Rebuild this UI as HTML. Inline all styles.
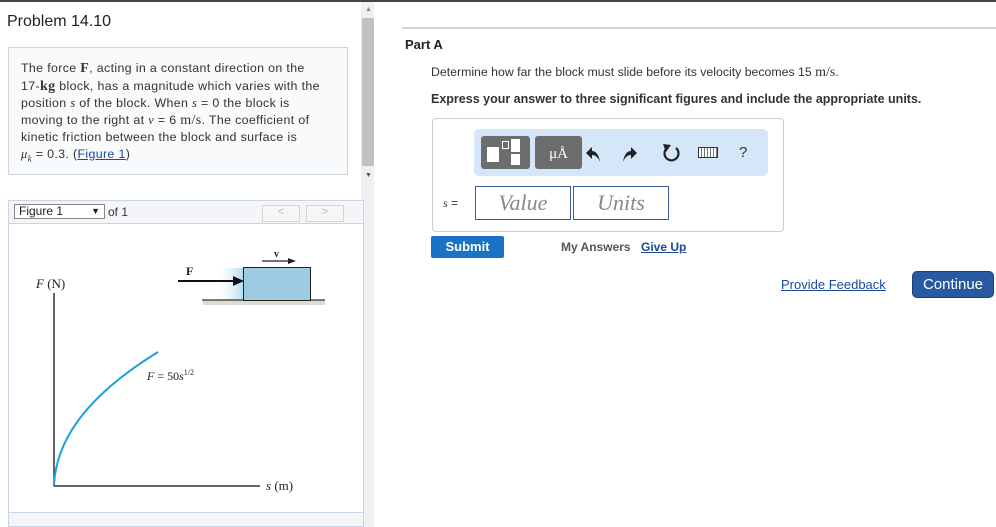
<!DOCTYPE html>
<html><head><style>
*{margin:0;padding:0;box-sizing:border-box}
body{width:996px;height:527px;background:#fff;font-family:"Liberation Sans",sans-serif;position:relative;overflow:hidden;color:#333}
.a{position:absolute}
.serif{font-family:"Liberation Serif",serif}
a{color:#1a4a9a}
</style></head><body>
<div class="a" style="left:0;top:0;width:996px;height:2px;background:#444"></div>
<div class="a" style="left:7px;top:13px;font-size:16px;color:#222">Problem 14.10</div>
<div class="a" style="left:8px;top:47px;width:340px;height:128px;border:1px solid #ccd3dc;background:#f8fafc"></div>
<div class="a" style="left:21px;top:60px;white-space:nowrap;font-size:12.4px;line-height:16.6px;color:#333;letter-spacing:0.35px">The force <b class="serif" style="font-size:14px">F</b>, acting in a constant direction on the<br>17-<b class="serif" style="font-size:14px">kg</b> block, has a magnitude which varies with the<br>position <i class="serif">s</i> of the block. When <i class="serif">s</i> = 0 the block is<br>moving to the right at <i class="serif">v</i> = 6 <span class="serif" style="font-size:14px">m/s</span>. The coefficient of<br>kinetic friction between the block and surface is<br><i class="serif">μ<sub style="font-size:9px">k</sub></i> = 0.3. (<a href="#">Figure 1</a>)</div>
<!-- scrollbar -->
<div class="a" style="left:361px;top:2px;width:13px;height:525px;background:#f0f0f0"></div>
<div class="a" style="left:362px;top:18px;width:12px;height:148px;background:#c1c1c1"></div>
<div class="a" style="left:365px;top:6px;font-size:7px;color:#888">▲</div>
<div class="a" style="left:365px;top:172px;font-size:7px;color:#555">▼</div>
<!-- figure -->
<div class="a" style="left:8px;top:200px;width:356px;height:327px;border:1px solid #c9d5e5;background:#f3f5f8"></div>
<div class="a" style="left:14px;top:204px;width:91px;height:15px;border:1px solid #888;background:#fff;font-size:12px;padding-left:4px;line-height:13px;color:#222">Figure 1<span style="position:absolute;right:4px;font-size:9px">▼</span></div>
<div class="a" style="left:108px;top:205px;font-size:12px;color:#333">of 1</div>
<div class="a" style="left:262px;top:205px;width:38px;height:17px;border:1px solid #d5d5d5;background:#f6f6f6;color:#bbb;font-size:11px;text-align:center">&lt;</div>
<div class="a" style="left:306px;top:205px;width:38px;height:17px;border:1px solid #d5d5d5;background:#f6f6f6;color:#bbb;font-size:11px;text-align:center">&gt;</div>
<div class="a" style="left:9px;top:223px;width:354px;height:290px;background:#fff;border-top:1px solid #c9d5e5;border-bottom:1px solid #c9d5e5"></div>
<svg class="a" style="left:0;top:220px" width="370" height="307">
<defs><linearGradient id="g" x1="1" x2="0"><stop offset="0" stop-color="#a9d6ef"/><stop offset="1" stop-color="#fff" stop-opacity="0"/></linearGradient></defs>
<rect x="215" y="48" width="30" height="32" fill="url(#g)"/>
<rect x="203" y="80" width="122" height="5" fill="#dcdccf"/>
<line x1="202" y1="80" x2="325" y2="80" stroke="#333" stroke-width="1.3"/>
<rect x="243.5" y="47.5" width="67" height="33" fill="#9fcbe2" stroke="#222"/>
<line x1="178" y1="61" x2="236" y2="61" stroke="#111" stroke-width="2"/>
<polygon points="244,61 233,56 233,66" fill="#111"/>
<text x="186" y="55" class="serif" font-weight="bold" font-size="12" fill="#222">F</text>
<line x1="262" y1="41" x2="290" y2="41" stroke="#222" stroke-width="1.2"/>
<polygon points="296,41 288,38 288,44" fill="#222"/>
<text x="274" y="37" class="serif" font-weight="bold" font-size="10" fill="#222">v</text>
<text x="36" y="68" class="serif" font-size="13" fill="#222"><tspan font-style="italic">F</tspan> (N)</text>
<line x1="54" y1="73" x2="54" y2="266" stroke="#333" stroke-width="1.5"/>
<line x1="54" y1="266" x2="260" y2="266" stroke="#333" stroke-width="1.5"/>
<text x="266" y="270" class="serif" font-size="13" fill="#222"><tspan font-style="italic">s</tspan> (m)</text>
<path d="M54,265 C56,225 80,180 158,132" fill="none" stroke="#1f9fdc" stroke-width="2"/>
<text x="147" y="160" class="serif" font-size="12" fill="#222"><tspan font-style="italic">F</tspan> = 50<tspan font-style="italic">s</tspan><tspan font-size="8" dy="-5">1/2</tspan></text>
</svg>
<!-- right -->
<div class="a" style="left:402px;top:27px;width:594px;height:2px;background:#d0d0d0"></div>
<div class="a" style="left:405px;top:37px;font-size:13px;font-weight:bold;color:#222">Part A</div>
<div class="a" style="left:431px;top:65px;font-size:12.3px;color:#333">Determine how far the block must slide before its velocity becomes 15 <span class="serif" style="font-size:14px">m/s</span>.</div>
<div class="a" style="left:431px;top:92px;font-size:12.5px;font-weight:bold;color:#333">Express your answer to three significant figures and include the appropriate units.</div>
<div class="a" style="left:432px;top:118px;width:352px;height:114px;border:1px solid #ccc;border-radius:4px"></div>
<div class="a" style="left:474px;top:129px;width:294px;height:47px;background:#d5e6f9;border-radius:5px"></div>
<div class="a" style="left:481px;top:136px;width:49px;height:33px;background:#6d6d6d;border-radius:3px"></div>
<div class="a" style="left:487px;top:147px;width:12px;height:15px;background:#fff"></div>
<div class="a" style="left:502px;top:141px;width:7px;height:8px;border:1px solid #fff"></div>
<div class="a" style="left:511px;top:139px;width:9px;height:13px;background:#fff"></div>
<div class="a" style="left:511px;top:154px;width:9px;height:11px;background:#fff"></div>
<div class="a" style="left:535px;top:136px;width:47px;height:33px;background:#6d6d6d;border-radius:3px;color:#fff;font-family:'Liberation Serif',serif;font-size:15px;text-align:center;line-height:36px">μÅ</div>
<svg class="a" style="left:582px;top:139px" width="110" height="36">
<path d="M18,23 C17,16 14,12 10,12 L10,8 L4,14 L10,20 L10,16 C13,16 16,18 18,23Z" fill="#222"/>
<path d="M41,23 C42,16 45,12 49,12 L49,8 L55,14 L49,20 L49,16 C46,16 43,18 41,23Z" fill="#222"/>
<path d="M94,9 A7,7 0 1 1 85,9" fill="none" stroke="#222" stroke-width="2.2"/>
<polygon points="81,5 89,6 84,13" fill="#222"/>
</svg>
<div class="a" style="left:698px;top:147px;width:20px;height:11px;border:1px solid #333;background:repeating-linear-gradient(90deg,#fff 0 2px,#777 2px 3px)"></div>
<div class="a" style="left:739px;top:144px;font-size:15px;color:#333">?</div>
<div class="a" style="left:443px;top:196px;font-size:12px;color:#333"><i class="serif">s</i> =</div>
<div class="a" style="left:475px;top:186px;width:96px;height:34px;border:1px solid #3a5aa8;font-family:'Liberation Serif',serif;font-style:italic;font-size:22px;color:#888;text-align:center;line-height:32px">Value</div>
<div class="a" style="left:573px;top:186px;width:96px;height:34px;border:1px solid #3a5aa8;font-family:'Liberation Serif',serif;font-style:italic;font-size:22px;color:#888;text-align:center;line-height:32px">Units</div>
<div class="a" style="left:431px;top:236px;width:73px;height:22px;background:#1a73c4;border-radius:2px;color:#fff;font-weight:bold;font-size:13px;text-align:center;line-height:21px">Submit</div>
<div class="a" style="left:561px;top:240px;font-size:12px;font-weight:bold;color:#555">My Answers</div>
<div class="a" style="left:641px;top:240px;font-size:12px;font-weight:bold"><a href="#">Give Up</a></div>
<div class="a" style="left:781px;top:277px;font-size:13px"><a href="#">Provide Feedback</a></div>
<div class="a" style="left:912px;top:271px;width:82px;height:27px;background:#275aa0;border-radius:5px;color:#fff;font-size:15px;text-align:center;line-height:25px;border:1px solid #1c3f78">Continue</div>
</body></html>
